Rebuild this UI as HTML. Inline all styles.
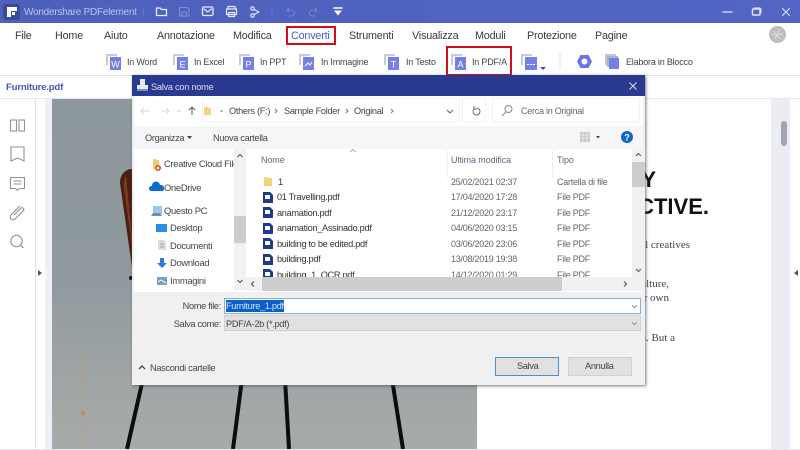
<!DOCTYPE html>
<html><head><meta charset="utf-8">
<style>
html,body{margin:0;padding:0;width:800px;height:450px;overflow:hidden;background:#fff}
body{position:relative;font-family:"Liberation Sans",sans-serif;color:#333;filter:blur(.3px)}
div,svg{position:absolute}
.t{position:absolute;white-space:nowrap;transform:translateY(calc(-50% + 1px));line-height:14px}
.m{font-size:10.8px;letter-spacing:-.2px;color:#3a3a3a;top:35px}
.b{font-size:9px;letter-spacing:-.2px;color:#444;top:61px}
.d{font-size:9.2px;letter-spacing:-.3px;color:#444}
.n{font-size:9.4px;letter-spacing:-.3px;color:#444}
.g{font-size:9px;letter-spacing:-.25px;color:#666}
.h{font-size:9px;letter-spacing:-.1px;color:#5a6b80;top:159px}
</style></head><body>
<!-- title bar -->
<div style="left:0;top:0;width:800px;height:23px;background:linear-gradient(90deg,#4d60bb,#5365c4)"></div>
<svg style="left:0;top:0" width="800" height="23" fill="none" stroke-linecap="round" stroke-linejoin="round">
<rect x="3" y="4" width="17" height="16" rx="3" fill="#3c4a94"/>
<path d="M7 7h10v4h-6v6H7z" fill="#fff"/><rect x="12" y="12" width="3" height="3" fill="#fff"/>
<path d="M156.500 8h3.500l1.500 1.500h5v6h-10z" stroke="#e8ecfa" stroke-width="1.300"/>
<path d="M179.500 7.500h7.500l2 2v6.500h-9.500z M182 12h4.500v4h-4.500z" stroke="#7f8ed2" stroke-width="1.100"/>
<rect x="202.500" y="7" width="10.500" height="8.500" rx="1.500" stroke="#e8ecfa" stroke-width="1.300"/><path d="M204 9l3.700 3 3.700-3" stroke="#e8ecfa" stroke-width="1.200"/>
<path d="M228 9V6.500h7V9M226.500 9h10v5.500h-10zM228.500 12.500h6v4h-6z" stroke="#e8ecfa" stroke-width="1.200"/>
<circle cx="252.500" cy="8.500" r="1.700" stroke="#e8ecfa" stroke-width="1.200"/><circle cx="252.500" cy="15.500" r="1.700" stroke="#e8ecfa" stroke-width="1.200"/><path d="M254 9.500l5 2.500-5 2.500" stroke="#e8ecfa" stroke-width="1.200"/>
<path d="M289 8l-2 2 2 2M287 10h4.500a3 3 0 0 1 0 6h-2.500" stroke="#7585cc" stroke-width="1.100"/>
<path d="M315 8l2 2-2 2M317 10h-4.500a3 3 0 0 0 0 6h2.500" stroke="#7585cc" stroke-width="1.100"/>
<path d="M334 8h8" stroke="#fff" stroke-width="1.600"/><path d="M334 10.500h8l-4 5z" fill="#fff"/>
<path d="M723 12h9" stroke="#c9d0ef" stroke-width="1.500"/>
<rect x="752.500" y="9" width="7.500" height="6" rx="1" stroke="#dfe3f6" stroke-width="1.500"/><path d="M754 8h6l1 1v4" stroke="#dfe3f6"/>
<path d="M782.500 8.500l7 7M789.500 8.500l-7 7" stroke="#dfe3f6" stroke-width="1.100"/>
<path d="M143 8v9M272 8v9" stroke="#6676c6"/>
</svg>
<span class="t" style="left:24px;top:12px;font-size:10px;letter-spacing:-.25px;color:#b9c2ea">Wondershare PDFelement</span>

<!-- menu -->
<span class="t m" style="left:15px">File</span>
<span class="t m" style="left:55px">Home</span>
<span class="t m" style="left:104px">Aiuto</span>
<span class="t m" style="left:157px">Annotazione</span>
<span class="t m" style="left:233px">Modifica</span>
<span class="t m" style="left:291px;color:#4a5cc8">Converti</span>
<span class="t m" style="left:349px">Strumenti</span>
<span class="t m" style="left:412px">Visualizza</span>
<span class="t m" style="left:475px">Moduli</span>
<span class="t m" style="left:527px">Protezione</span>
<span class="t m" style="left:595px">Pagine</span>
<div style="left:286px;top:26px;width:46px;height:15px;border:2px solid #d00f1e"></div>
<svg style="left:769px;top:26px" width="17" height="17"><circle cx="8.500" cy="8.500" r="8.500" fill="#bdbdbd"/><path d="M4 5l7 8M11 3l-5 10M3 9l11-1" stroke="#d8d8d8" stroke-width="1.300"/></svg>

<!-- ribbon icons -->
<svg style="left:0;top:45px" width="800" height="30">
<g>
<rect x="106" y="9" width="11" height="11" fill="#c9cbd6"/><rect x="108" y="11" width="11" height="11" fill="#fff"/><rect x="110" y="12" width="11" height="13" fill="#7580e6"/>
<rect x="173" y="9" width="11" height="11" fill="#c9cbd6"/><rect x="175" y="11" width="11" height="11" fill="#fff"/><rect x="177" y="12" width="11" height="13" fill="#7580e6"/>
<rect x="239" y="9" width="11" height="11" fill="#c9cbd6"/><rect x="241" y="11" width="11" height="11" fill="#fff"/><rect x="243" y="12" width="11" height="13" fill="#7580e6"/>
<rect x="299" y="9" width="11" height="11" fill="#c9cbd6"/><rect x="301" y="11" width="11" height="11" fill="#fff"/><rect x="303" y="12" width="11" height="13" fill="#7580e6"/>
<rect x="384" y="9" width="11" height="11" fill="#c9cbd6"/><rect x="386" y="11" width="11" height="11" fill="#fff"/><rect x="388" y="12" width="11" height="13" fill="#7580e6"/>
<rect x="451" y="9" width="11" height="11" fill="#c9cbd6"/><rect x="453" y="11" width="11" height="11" fill="#fff"/><rect x="455" y="12" width="11" height="13" fill="#7580e6"/>
<rect x="521" y="9" width="11" height="11" fill="#c9cbd6"/><rect x="523" y="11" width="11" height="11" fill="#fff"/><rect x="525" y="12" width="12" height="13" fill="#7580e6"/>
<rect x="605" y="9" width="11" height="11" fill="#c4c5d2"/><rect x="607" y="11" width="11" height="11" fill="#aeb0c8"/><rect x="609" y="13" width="10" height="11" fill="#7580e6"/>
</g>
<g font-size="9" fill="#fff" text-anchor="middle" font-family="Liberation Sans">
<text x="115.500" y="22.500">W</text>
<text x="182.500" y="22.500">E</text>
<text x="248.500" y="22.500">P</text>
<text x="393.500" y="22.500">T</text>
<text x="460.500" y="22.500">A</text>
</g>
<path d="M305 21l3-3 2 2 2-3" stroke="#fff" fill="none"/>
<path d="M527 19.500h8" stroke="#fff" stroke-dasharray="2 1"/>
<path d="M540 22h6l-3 3z" fill="#4351a8"/>
<path d="M560 7v18" stroke="#e2e3e8"/>
<path d="M577 16.500l3.500-6.500h8l3.500 6.500-3.500 6.500h-8z" fill="#6b76e4"/><circle cx="584.500" cy="16.500" r="3" fill="#fff"/>
</svg>
<span class="t b" style="left:127px">In Word</span>
<span class="t b" style="left:194px">In Excel</span>
<span class="t b" style="left:260px">In PPT</span>
<span class="t b" style="left:321px">In Immagine</span>
<span class="t b" style="left:406px">In Testo</span>
<span class="t b" style="left:472px">In PDF/A</span>
<span class="t b" style="left:626px">Elabora in Blocco</span>
<div style="left:446px;top:46px;width:62px;height:26px;border:2px solid #d00f1e"></div>

<!-- tab bar -->
<div style="left:0;top:75px;width:800px;height:1px;background:#e3e4ea"></div>
<div style="left:0;top:98px;width:800px;height:1px;background:#e6e7ee"></div>
<span class="t" style="left:6px;top:87px;font-size:9.600px;letter-spacing:-.2px;font-weight:bold;color:#4456c2">Furniture.pdf</span>

<!-- workspace -->
<div style="left:35px;top:99px;width:1px;height:351px;background:#dfe0e6"></div>
<div style="left:45px;top:99px;width:7px;height:350px;background:#eff0f7"></div>
<div style="left:52px;top:99px;width:425px;height:350px;background:linear-gradient(180deg,#8d989d 0%,#8f999e 50%,#a2a7a6 85%,#a7abaa 100%);overflow:hidden">
<svg style="left:0;top:0" width="425" height="350">
<path d="M82 70h-4q-10 3-10 14l12 84 2 2z" fill="#4a1f12"/><path d="M74 76q-3 6-2 14l10 70z" fill="#7c3a1f"/>
<circle cx="79" cy="179" r="2" fill="#111"/>
<path d="M29 251q-2 50 0 99h5q-2-50-1-99z" fill="#b89a82" opacity=".22" style="filter:blur(1.500px)"/><circle cx="31" cy="314" r="2.500" fill="#bc8a66" opacity=".8"/>
<path d="M91 280l-16 70" stroke="#0c0d0e" stroke-width="4"/>
<path d="M190 280l-9 70" stroke="#0c0d0e" stroke-width="4"/>
<path d="M233 280l4 70" stroke="#0c0d0e" stroke-width="4"/>
<path d="M340 280l11 70" stroke="#0c0d0e" stroke-width="4"/>
</svg></div>
<div style="left:0;top:449px;width:800px;height:1px;background:#e6e7ec"></div>
<!-- page text -->
<div style="left:477px;top:99px;width:294px;height:350px;overflow:hidden;background:#fff">
<span class="t" style="right:115px;top:81px;font-size:22px;font-weight:bold;color:#111;transform:translateY(-50%)">MY</span>
<span class="t" style="right:62px;top:108px;font-size:22px;font-weight:bold;color:#111;transform:translateY(-50%)">PRODUCTIVE.</span>
<span class="t" style="right:81px;top:145px;font-size:11px;font-family:'Liberation Serif',serif;color:#444">real creatives</span>
<span class="t" style="right:102px;top:184px;font-size:11px;font-family:'Liberation Serif',serif;color:#444">culture,</span>
<span class="t" style="right:102px;top:198px;font-size:11px;font-family:'Liberation Serif',serif;color:#444">your own</span>
<span class="t" style="right:96px;top:238px;font-size:11px;font-family:'Liberation Serif',serif;color:#444">vision. But a</span>
</div>
<!-- sidebar icons -->
<svg style="left:0;top:100px" width="46" height="350" fill="none" stroke="#8f929c" stroke-width="1.100">
<rect x="10.500" y="20" width="6" height="11"/><rect x="19" y="20" width="5.500" height="11"/>
<path d="M11 47h13v14l-6.500-3-6.500 3z"/>
<path d="M10.500 77.500h14v11h-5l-2 2-2-2h-5z"/><path d="M13.500 81h8M13.500 84h8"/>
<path d="M14 115l7-7a1.800 1.800 0 0 1 2.500 2.500l-8.500 8.500a2.800 2.800 0 0 1-4-4l9-9"/>
<circle cx="16.500" cy="141" r="5.700"/><path d="M20.500 145l3 3"/>
<path d="M38 170v6l4-3z" fill="#555" stroke="none"/>
</svg>
<!-- right scrollbar -->
<div style="left:771px;top:99px;width:19px;height:350px;background:#ecedf3"></div>
<div style="left:781px;top:121px;width:6px;height:25px;border-radius:3px;background:#a0a4b3"></div>
<svg style="left:790px;top:268px" width="10" height="10"><path d="M8 2v6l-4-3z" fill="#555"/></svg>

<!-- dialog -->
<div style="left:132px;top:75px;width:513px;height:310px;background:#f0f0f0;box-shadow:1px 1px 3px rgba(70,75,100,.75)"></div>
<div style="left:132px;top:75px;width:513px;height:21px;background:#2b3a91"></div>
<svg style="left:136px;top:78px" width="14" height="15"><path d="M4 1h5v6h3v4H1V7h3z" fill="#e9e9ef"/><path d="M1 12h11" stroke="#9ea6d8" stroke-width="1.500"/></svg>
<span class="t" style="left:151px;top:86px;font-size:9.200px;letter-spacing:-.25px;color:#d9dcf0">Salva con nome</span>
<svg style="left:628px;top:81px" width="10" height="10"><path d="M1.500 1.500l7 7M8.500 1.500l-7 7" stroke="#d5d9ef"/></svg>
<!-- address row -->
<div style="left:134px;top:96px;width:509px;height:30px;background:#fff"></div>
<div style="left:202px;top:98px;width:258px;height:24px;background:#fff;border:1px solid #f1f2f4;box-sizing:border-box"></div>
<div style="left:462px;top:98px;width:24px;height:24px;background:#fff;border:1px solid #f1f2f4;box-sizing:border-box"></div>
<div style="left:492px;top:98px;width:148px;height:24px;background:#fff;border:1px solid #f1f2f4;box-sizing:border-box"></div>
<svg style="left:140px;top:100px" width="74" height="22" fill="none" stroke-linejoin="round">
<path d="M1 11h8M1 11l3-3M1 11l3 3" stroke="#d5d8dc"/><path d="M21 11h8M29 11l-3-3M29 11l-3 3" stroke="#d5d8dc"/>
<path d="M37 10l2 2 2-2" stroke="#d5d8dc"/>
<path d="M52 15V7M52 7l-3 3M52 7l3 3" stroke="#555"/>
<path d="M64 7h4l1 1h2v7h-7z" fill="#f5d684"/>
</svg>
<span class="t d" style="left:229px;top:110px">Others (F:)</span>
<span class="t d" style="left:284px;top:110px">Sample Folder</span>
<span class="t d" style="left:354px;top:110px">Original</span>
<svg style="left:215px;top:105px" width="185" height="12" fill="none" stroke="#777"><path d="M5 6h3"/><path d="M60 4l2 2-2 2M131 4l2 2-2 2M176 4l2 2-2 2"/></svg>
<svg style="left:444px;top:105px" width="60" height="14" fill="none" stroke="#666"><path d="M3 5l3 3 3-3"/><path d="M33 3a3.500 3.500 0 1 1-3 1M30 1v3h3"/></svg>
<svg style="left:500px;top:104px" width="14" height="14" fill="none" stroke="#888"><circle cx="8.500" cy="5" r="3.500"/><path d="M6 8l-4 4"/></svg>
<span class="t g" style="left:521px;top:110px">Cerca in Original</span>
<!-- toolbar -->
<div style="left:134px;top:126px;width:509px;height:23px;background:#f5f6f7"></div>
<span class="t d" style="left:145px;top:137px">Organizza</span>
<svg style="left:187px;top:135px" width="6" height="5"><path d="M0 1h5l-2.500 3z" fill="#444"/></svg>
<span class="t d" style="left:213px;top:137px">Nuova cartella</span>
<svg style="left:579px;top:131px" width="22" height="14"><rect x="1" y="1" width="10" height="10" fill="#c8c8c8"/><path d="M1 4h10M1 7h10M4 1v10M8 1v10" stroke="#eee" stroke-width=".7"/><path d="M17 5h4l-2 2.500z" fill="#444"/></svg>
<svg style="left:621px;top:131px" width="12" height="12"><circle cx="6" cy="6" r="6" fill="#0f68c4"/><text x="6" y="9.500" font-size="9" font-weight="bold" fill="#fff" text-anchor="middle" font-family="Liberation Sans">?</text></svg>
<!-- list -->
<div style="left:134px;top:149px;width:509px;height:143px;background:#fff"></div>
<div style="left:234px;top:149px;width:12px;height:141px;background:#f1f1f1"></div>
<div style="left:234px;top:216px;width:12px;height:27px;background:#cdcdcd"></div>
<svg style="left:234px;top:149px" width="12" height="141" fill="none" stroke="#555"><path d="M3.500 8l2.500-2.500 2.500 2.500M3.500 131l2.500 2.500 2.500-2.500"/></svg>
<div style="left:632px;top:149px;width:13px;height:128px;background:#f1f1f1"></div>
<div style="left:632px;top:162px;width:13px;height:25px;background:#cdcdcd"></div>
<svg style="left:632px;top:149px" width="13" height="128" fill="none" stroke="#555"><path d="M4 7l2.500-2.500 2.500 2.500M4 120l2.500 2.500 2.500-2.500"/></svg>
<div style="left:246px;top:277px;width:399px;height:14px;background:#f1f1f1"></div>
<div style="left:262px;top:277px;width:300px;height:14px;background:#cdcdcd"></div>
<svg style="left:250px;top:280px" width="385" height="9" fill="none" stroke="#444"><path d="M4 1.500l-2.500 2.500 2.500 2.500M374 1.500l2.500 2.500-2.500 2.500"/></svg>
<div style="left:447px;top:150px;width:1px;height:28px;background:#eef0f4"></div>
<div style="left:552px;top:150px;width:1px;height:28px;background:#eef0f4"></div>
<svg style="left:348px;top:148px" width="10" height="6" fill="none" stroke="#aaa"><path d="M2 4l3-2.500 3 2.500"/></svg>
<span class="t h" style="left:261px">Nome</span>
<span class="t h" style="left:451px">Ultima modifica</span>
<span class="t h" style="left:557px">Tipo</span>

<!-- nav pane -->
<svg style="left:148px;top:155px" width="30" height="132">
<path d="M5 4h3l1 1h2v6l2 0v3h-8z" fill="#f3cd72"/><circle cx="10" cy="13" r="3" fill="#e2552b"/><circle cx="10" cy="13" r="1.300" fill="#fff"/>
<path d="M3 36a2.500 2.500 0 0 1 1-5 4 4 0 0 1 8-1 3.500 3.500 0 0 1 3 6z" fill="#0f6cc6"/>
<path d="M5 51h9v8H5z" fill="#9fc7e8"/><path d="M3 61l2-3h7l2 3z" fill="#7a8ea8"/>
<rect x="8" y="69" width="11" height="8" fill="#2a8fe0"/>
<path d="M10 85h6l2 2v8h-8z" fill="#d9dde2"/><path d="M12 89h4M12 92h4" stroke="#8aa"/>
<path d="M12 103h4v5h3l-5 5-5-5h3z" fill="#2b7cd3"/>
<rect x="9" y="122" width="10" height="8" fill="#7f9fc0"/><path d="M10 127l3-2 5 3" stroke="#fff" fill="none"/>
</svg>
<div style="left:134px;top:149px;width:100px;height:128px;overflow:hidden">
<span class="t n" style="left:30px;top:14px">Creative Cloud Files</span>
<span class="t n" style="left:30px;top:38px">OneDrive</span>
<span class="t n" style="left:30px;top:61px">Questo PC</span>
<span class="t n" style="left:36px;top:78px">Desktop</span>
<span class="t n" style="left:36px;top:96px">Documenti</span>
<span class="t n" style="left:36px;top:113px">Download</span>
</div>
<span class="t n" style="left:170px;top:280px">Immagini</span>
<!-- rows -->
<div style="left:246px;top:170px;width:386px;height:107px;overflow:hidden">
<svg style="left:0;top:0" width="40" height="107">
<path d="M18 7h3l1 1h4v8h-8z" fill="#f3d27a"/>
<g fill="#1f3a8c">
<path d="M17 22h7l3 3v8H17z"/><path d="M17 37h7l3 3v8H17z"/><path d="M17 53h7l3 3v8H17z"/><path d="M17 68h7l3 3v8H17z"/><path d="M17 84h7l3 3v8H17z"/><path d="M17 99h7l3 3v8H17z"/>
</g>
<g fill="#fff"><rect x="19" y="25" width="5" height="4"/><rect x="19" y="40" width="5" height="4"/><rect x="19" y="56" width="5" height="4"/><rect x="19" y="71" width="5" height="4"/><rect x="19" y="87" width="5" height="4"/><rect x="19" y="102" width="5" height="4"/></g>
</svg>
<span class="t d" style="left:32px;top:11px;color:#333">1</span>
<span class="t d" style="left:31px;top:26px;color:#333">01 Travelling.pdf</span>
<span class="t d" style="left:31px;top:42px;color:#333">anamation.pdf</span>
<span class="t d" style="left:31px;top:57px;color:#333">anamation_Assinado.pdf</span>
<span class="t d" style="left:31px;top:73px;color:#333">building to be edited.pdf</span>
<span class="t d" style="left:31px;top:88px;color:#333">building.pdf</span>
<span class="t d" style="left:31px;top:104px;color:#333">building_1_OCR.pdf</span>
<span class="t g" style="left:205px;top:11px">25/02/2021 02:37</span>
<span class="t g" style="left:205px;top:26px">17/04/2020 17:28</span>
<span class="t g" style="left:205px;top:42px">21/12/2020 23:17</span>
<span class="t g" style="left:205px;top:57px">04/06/2020 03:15</span>
<span class="t g" style="left:205px;top:73px">03/06/2020 23:06</span>
<span class="t g" style="left:205px;top:88px">13/08/2019 19:38</span>
<span class="t g" style="left:205px;top:104px">14/12/2020 01:29</span>
<span class="t g" style="left:311px;top:11px">Cartella di file</span>
<span class="t g" style="left:311px;top:26px">File PDF</span>
<span class="t g" style="left:311px;top:42px">File PDF</span>
<span class="t g" style="left:311px;top:57px">File PDF</span>
<span class="t g" style="left:311px;top:73px">File PDF</span>
<span class="t g" style="left:311px;top:88px">File PDF</span>
<span class="t g" style="left:311px;top:104px">File PDF</span>
</div>
<!-- bottom -->
<span class="t d" style="right:579px;top:305px">Nome file:</span>
<span class="t d" style="right:579px;top:323px">Salva come:</span>
<div style="left:224px;top:298px;width:417px;height:16px;background:#fff;border:1px solid #7fb4cf;box-sizing:border-box"></div>
<div style="left:226px;top:300px;width:58px;height:12px;background:#0a60c8"></div>
<span class="t d" style="left:226px;top:305px;color:#d5e4f7">Furniture_1.pdf</span>
<div style="left:224px;top:315px;width:417px;height:16px;background:#e1e1e1;border:1px solid #d0d0d0;box-sizing:border-box"></div>
<span class="t d" style="left:226px;top:323px">PDF/A-2b (*.pdf)</span>
<svg style="left:630px;top:302px" width="10" height="28" fill="none" stroke="#888"><path d="M2 3.500l2.500 2 2.500-2M2 20.500l2.500 2 2.500-2"/></svg>
<svg style="left:138px;top:364px" width="10" height="8" fill="none" stroke="#333" stroke-width="1.200"><path d="M1 5l3-3 3 3"/></svg>
<span class="t d" style="left:150px;top:367px">Nascondi cartelle</span>
<div style="left:495px;top:357px;width:64px;height:19px;background:#e1e1e1;border:1px solid #4f90c0;box-sizing:border-box"></div>
<div style="left:568px;top:357px;width:64px;height:19px;background:#e1e1e1;border:1px solid #d2d2d2;box-sizing:border-box"></div>
<span class="t d" style="left:517px;top:365px">Salva</span>
<span class="t d" style="left:585px;top:365px">Annulla</span>
</body></html>
